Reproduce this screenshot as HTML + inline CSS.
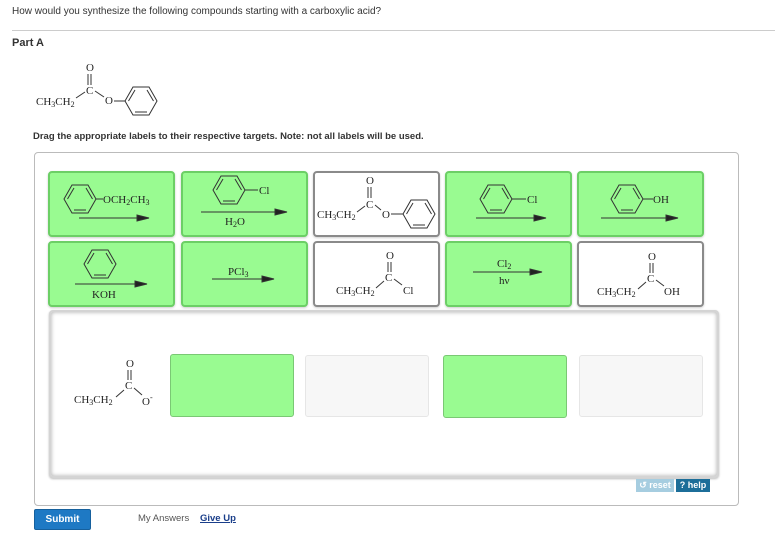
<!DOCTYPE html>
<html><head><meta charset="utf-8"><style>
body{margin:0;width:775px;height:535px;background:#fff;position:relative;overflow:hidden;font-family:"Liberation Sans",Arial,sans-serif}
.a{position:absolute}
.t{position:absolute;border-radius:4px;box-sizing:border-box;box-shadow:0 1px 2px rgba(0,0,0,0.2)}
.g{background:#99fb91;border:2px solid #6ccf66}
.w{background:#fff;border:2px solid #8a8a8a}
.s{position:absolute;border-radius:3px;box-sizing:border-box}
svg text{font-family:"Liberation Serif",serif;font-size:11px;fill:#222}
</style></head><body>
<div class="a" style="left:12px;top:6px;font-size:10px;color:#333">How would you synthesize the following compounds starting with a carboxylic acid?</div>
<div class="a" style="left:12px;top:30px;width:763px;height:1px;background:#ccc"></div>
<div class="a" style="left:12px;top:37px;font-size:11px;font-weight:bold;color:#333">Part A</div>
<div class="a" style="left:33px;top:131px;font-size:9.5px;font-weight:bold;color:#333">Drag the appropriate labels to their respective targets. Note: not all labels will be used.</div>
<div class="a" style="left:34px;top:152px;width:705px;height:354px;border:1px solid #bbb;border-radius:4px;box-sizing:border-box"></div>
<div class="t g" style="left:48px;top:171px;width:127px;height:66px"></div>
<div class="t g" style="left:181px;top:171px;width:127px;height:66px"></div>
<div class="t w" style="left:313px;top:171px;width:127px;height:66px"></div>
<div class="t g" style="left:445px;top:171px;width:127px;height:66px"></div>
<div class="t g" style="left:577px;top:171px;width:127px;height:66px"></div>
<div class="t g" style="left:48px;top:241px;width:127px;height:66px"></div>
<div class="t g" style="left:181px;top:241px;width:127px;height:66px"></div>
<div class="t w" style="left:313px;top:241px;width:127px;height:66px"></div>
<div class="t g" style="left:445px;top:241px;width:127px;height:66px"></div>
<div class="t w" style="left:577px;top:241px;width:127px;height:66px"></div>
<div class="a" style="left:49px;top:310px;width:670px;height:168px;border:2px solid #d4d4d4;border-radius:4px;box-sizing:border-box;box-shadow:inset 0 0 4px #aaa,0 1px 2px #bbb;background:#fff"></div>
<div class="s" style="left:170px;top:354px;width:124px;height:63px;background:#99fb91;border:1px solid #7ac874"></div>
<div class="s" style="left:305px;top:355px;width:124px;height:62px;background:#f7f7f7;border:1px solid #e6e6e6"></div>
<div class="s" style="left:443px;top:355px;width:124px;height:63px;background:#99fb91;border:1px solid #7ac874"></div>
<div class="s" style="left:579px;top:355px;width:124px;height:62px;background:#f7f7f7;border:1px solid #e6e6e6"></div>
<div class="a" style="left:636px;top:479px;width:38px;height:13px;background:#a6cde0;color:#fff;font-size:9px;font-weight:bold;text-align:center;line-height:13px">&#8634; reset</div>
<div class="a" style="left:676px;top:479px;width:34px;height:13px;background:#1c6e99;color:#fff;font-size:9px;font-weight:bold;text-align:center;line-height:13px">? help</div>
<div class="a" style="left:34px;top:509px;width:55px;height:19px;background:#1e79c4;border:1px solid #16609d;border-radius:2px;color:#fff;font-size:10px;font-weight:bold;text-align:center;line-height:19px">Submit</div>
<div class="a" style="left:138px;top:513px;font-size:9.5px;color:#555">My Answers</div>
<div class="a" style="left:200px;top:513px;font-size:9.5px;color:#1a3e8a;text-decoration:underline;font-weight:bold">Give Up</div>
<svg class="a" style="left:0;top:0" width="775" height="535" stroke="#333" stroke-width="1" fill="none">
<defs>
<g id="bz"><polygon points="-16,0 -8,-14 8,-14 16,0 8,14 -8,14"/><line x1="-12.5" y1="0" x2="-6" y2="-11"/><line x1="6" y1="-11" x2="12.5" y2="0"/><line x1="-6" y1="11" x2="6" y2="11"/></g>
<g id="ar"><line x1="0" y1="0" x2="-70" y2="0"/><polygon points="0,0 -12,-3 -12,3" fill="#222"/></g>
</defs>
<text x="36" y="105" stroke="none">CH<tspan font-size="8" dy="2">3</tspan><tspan dy="-2">CH</tspan><tspan font-size="8" dy="2">2</tspan></text>
<text x="86" y="94" stroke="none">C</text><text x="86" y="71" stroke="none">O</text><text x="105" y="104" stroke="none">O</text>
<line x1="88" y1="74" x2="88" y2="85"/><line x1="91" y1="74" x2="91" y2="85"/>
<line x1="76" y1="98" x2="85" y2="92"/><line x1="95" y1="91" x2="104" y2="97"/><line x1="114" y1="101" x2="125" y2="101"/>
<use href="#bz" x="141" y="101"/>
<use href="#bz" x="80" y="199"/><line x1="96" y1="199" x2="103" y2="199"/><text x="103" y="203" stroke="none">OCH<tspan font-size="8" dy="2">2</tspan><tspan dy="-2">CH</tspan><tspan font-size="8" dy="2">3</tspan></text>
<use href="#ar" x="149" y="218"/>
<use href="#bz" x="229" y="190"/><line x1="245" y1="190" x2="258" y2="190"/><text x="259" y="194" stroke="none">Cl</text>
<line x1="201" y1="212" x2="286" y2="212"/><polygon points="287,212 275,209 275,215" fill="#222"/><text x="225" y="225" stroke="none">H<tspan font-size="8" dy="2">2</tspan><tspan dy="-2">O</tspan></text>
<text x="317" y="218" stroke="none">CH<tspan font-size="8" dy="2">3</tspan><tspan dy="-2">CH</tspan><tspan font-size="8" dy="2">2</tspan></text>
<text x="366" y="208" stroke="none">C</text><text x="366" y="184" stroke="none">O</text><text x="382" y="218" stroke="none">O</text>
<line x1="368" y1="187" x2="368" y2="198"/><line x1="371" y1="187" x2="371" y2="198"/>
<line x1="357" y1="212" x2="365" y2="206"/><line x1="375" y1="205" x2="381" y2="210"/><line x1="391" y1="214" x2="403" y2="214"/>
<use href="#bz" x="419" y="214"/>
<use href="#bz" x="496" y="199"/><line x1="512" y1="199" x2="526" y2="199"/><text x="527" y="203" stroke="none">Cl</text>
<use href="#ar" x="546" y="218"/>
<use href="#bz" x="627" y="199"/><line x1="643" y1="199" x2="653" y2="199"/><text x="653" y="203" stroke="none">OH</text>
<line x1="601" y1="218" x2="678" y2="218"/><polygon points="678,218 666,215 666,221" fill="#222"/>
<use href="#bz" x="100" y="264"/>
<use href="#ar" x="147" y="284"/><line x1="75" y1="284" x2="80" y2="284"/><text x="92" y="298" stroke="none">KOH</text>
<text x="228" y="275" stroke="none">PCl<tspan font-size="8" dy="2">3</tspan></text>
<line x1="212" y1="279" x2="272" y2="279"/><polygon points="274,279 262,276 262,282" fill="#222"/>
<text x="336" y="294" stroke="none">CH<tspan font-size="8" dy="2">3</tspan><tspan dy="-2">CH</tspan><tspan font-size="8" dy="2">2</tspan></text>
<text x="385" y="281" stroke="none">C</text><text x="386" y="259" stroke="none">O</text><text x="403" y="294" stroke="none">Cl</text>
<line x1="388" y1="262" x2="388" y2="272"/><line x1="391" y1="262" x2="391" y2="272"/>
<line x1="376" y1="288" x2="384" y2="281"/><line x1="394" y1="279" x2="402" y2="285"/>
<text x="497" y="267" stroke="none">Cl<tspan font-size="8" dy="2">2</tspan></text>
<line x1="473" y1="272" x2="540" y2="272"/><polygon points="542,272 530,269 530,275" fill="#222"/><text x="499" y="284" stroke="none">hν</text>
<text x="597" y="295" stroke="none">CH<tspan font-size="8" dy="2">3</tspan><tspan dy="-2">CH</tspan><tspan font-size="8" dy="2">2</tspan></text>
<text x="647" y="282" stroke="none">C</text><text x="648" y="260" stroke="none">O</text><text x="664" y="295" stroke="none">OH</text>
<line x1="650" y1="263" x2="650" y2="273"/><line x1="653" y1="263" x2="653" y2="273"/>
<line x1="638" y1="289" x2="646" y2="282"/><line x1="656" y1="280" x2="664" y2="286"/>
<text x="74" y="403" stroke="none">CH<tspan font-size="8" dy="2">3</tspan><tspan dy="-2">CH</tspan><tspan font-size="8" dy="2">2</tspan></text>
<text x="125" y="389" stroke="none">C</text><text x="126" y="367" stroke="none">O</text><text x="142" y="405" stroke="none">O<tspan font-size="8" dy="-5">-</tspan></text>
<line x1="128" y1="370" x2="128" y2="380"/><line x1="131" y1="370" x2="131" y2="380"/>
<line x1="116" y1="397" x2="124" y2="390"/><line x1="134" y1="388" x2="142" y2="395"/>
</svg>
</body></html>
